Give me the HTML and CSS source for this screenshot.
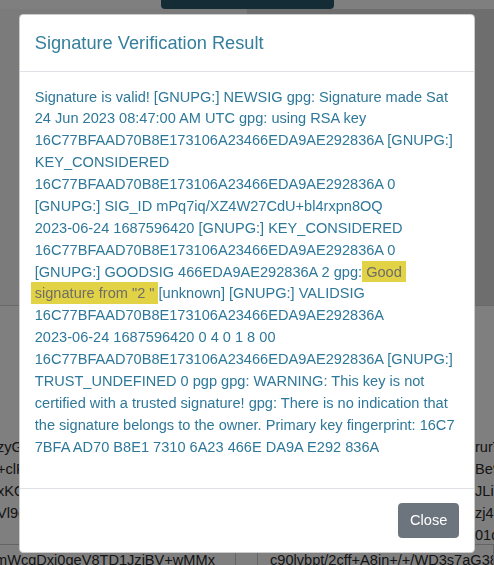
FILE: index.html
```html
<!DOCTYPE html>
<html lang="en">
<head>
<meta charset="utf-8">
<title>Signature Verification Result</title>
<link rel="stylesheet" href="styles.css">
</head>
<body>
<div class="page">
  <div class="topbar"><button class="topbtn" type="button"></button></div>
  <div class="panel-row">
    <div class="panel panel-light"></div>
    <div class="panel panel-dark"></div>
  </div>
  <div class="areas upper">
    <div class="area area-left">
      <div class="scroll">
        <div>zyGq</div>
        <div>+clR</div>
        <div>xKQ5</div>
        <div>Vl9c</div>
      </div>
    </div>
    <div class="area area-right">
      <div class="scroll">
        <div>rurT4k</div>
        <div>Be9xQ2</div>
        <div>JLi7wP</div>
        <div>zj4Ns1</div>
        <div>01qH8d</div>
      </div>
    </div>
  </div>
  <div class="areas lower">
    <div class="area area-left box"><div class="shift">mWcqDxi0geV8TD1JziBV+<span class="typo">wMMx</span></div></div>
    <div class="area area-right box">c90lvbpt/2cff+A8jn+/+/WD3s7aG38</div>
  </div>
</div>

<div class="backdrop"></div>

<div class="modal">
  <div class="modal-content">
    <div class="modal-header">
      <h5 class="modal-title">Signature Verification Result</h5>
    </div>
    <div class="modal-body">
      <p>Signature is valid! [GNUPG:] NEWSIG gpg: Signature made Sat 24 Jun 2023 08:47:00 AM UTC gpg: using RSA key 16C77BFAAD70B8E173106A23466EDA9AE292836A [GNUPG:] KEY_CONSIDERED 16C77BFAAD70B8E173106A23466EDA9AE292836A 0 [GNUPG:] SIG_ID mPq7iq/XZ4W27CdU+bl4rxpn8OQ <span class="nw">2023-06-24</span> 1687596420 [GNUPG:] KEY_CONSIDERED 16C77BFAAD70B8E173106A23466EDA9AE292836A 0 [GNUPG:] GOODSIG 466EDA9AE292836A 2 gpg: <mark class="hl">Good signature from "2 "</mark> [unknown] [GNUPG:] VALIDSIG 16C77BFAAD70B8E173106A23466EDA9AE292836A <span class="nw">2023-06-24</span> 1687596420 0 4 0 1 8 00 16C77BFAAD70B8E173106A23466EDA9AE292836A [GNUPG:] TRUST_UNDEFINED 0 pgp gpg: WARNING: This key is not certified with a trusted signature! gpg: There is no indication that the signature belongs to the owner. Primary key fingerprint: 16C7 7BFA AD70 B8E1 7310 6A23 466E DA9A E292 836A</p>
    </div>
    <div class="modal-footer">
      <button class="btn btn-secondary" type="button">Close</button>
    </div>
  </div>
</div>
</body>
</html>
```

FILE: styles.css
```css
* { box-sizing: border-box; }

html, body {
  margin: 0;
  padding: 0;
  height: 100%;
  overflow: hidden;
}

body {
  font-family: "Liberation Sans", Arial, sans-serif;
  font-size: 14.58px;
  line-height: 21.875px;
  color: #212529;
  background: #ffffff;
}

/* ---------- background page ---------- */
.page {
  display: flex;
  flex-direction: column;
}

.topbar {
  height: 9px;
  display: flex;
  justify-content: center;
}

.topbtn {
  width: 173px;
  height: 9px;
  border: 0;
  padding: 0;
  background: #26586a;
  border-radius: 0 0 4px 4px;
}

.panel-row {
  height: 297px;
  display: grid;
  grid-template-columns: 247px 1fr;
  border-bottom: 1px solid #d2d2d2;
}

.panel-light { background: #f7f7f7; }
.panel-dark { background: #dcdcdc; }

.areas {
  display: grid;
  grid-template-columns: 236px 237px;
  column-gap: 21px;
  color: #2a2a2a;
  white-space: nowrap;
}

.upper {
  margin-top: 134px;
  height: 104px;
}

.area { overflow: hidden; }

.upper .area-left .scroll {
  margin-top: -3px;
  margin-left: -3px;
}

.upper .area-right .scroll {
  margin-top: -3px;
  padding-left: 218px;
}

.lower {
  height: 30px;
}

.box {
  border: 1px solid #c8c8c8;
  padding: 5px 12px;
}

.area-left.box {
  padding-left: 0;
  border-left: 0;
}

.shift { margin-left: -5px; }

.typo {
  text-decoration: underline dotted #ff3a3a;
  text-decoration-thickness: 2px;
  text-underline-offset: 3px;
}

.backdrop {
  position: fixed;
  inset: 0;
  background: rgba(0, 0, 0, 0.5);
}

/* ---------- modal ---------- */
.modal {
  position: fixed;
  inset: 0;
  display: flex;
  justify-content: center;
  align-items: flex-start;
  padding-top: 14px;
}

.modal-content {
  width: 455.7px;
  background: #ffffff;
  border: 1px solid rgba(0, 0, 0, 0.2);
  border-radius: 4.4px;
  display: flex;
  flex-direction: column;
  color: #2f789a;
}

.modal-header {
  padding: 14px 14.58px 14.58px;
  border-bottom: 1px solid #dee2e6;
}

.modal-title {
  margin: 0;
  font-size: 18.23px;
  line-height: 27.35px;
  font-weight: 500;
  color: #357f9d;
}

.modal-body {
  padding: 14.58px;
}

.modal-body p {
  margin: 0 0 14.58px;
}

.nw { white-space: nowrap; }

.hl {
  background: #e2d246;
  color: #6e6e66;
  padding: 0.2em 0;
  -webkit-box-decoration-break: clone;
  box-decoration-break: clone;
  box-shadow: -4px 0 0 #e2d246, 4px 0 0 #e2d246;
}

.modal-footer {
  display: flex;
  justify-content: flex-end;
  align-items: center;
  padding: 10.9px;
  border-top: 1px solid #dee2e6;
}

.btn {
  margin: 3.65px;
  font-family: inherit;
  font-size: 14.58px;
  line-height: 21.875px;
  padding: 5.47px 10.94px;
  border: 1px solid transparent;
  border-radius: 3.65px;
}

.btn-secondary {
  background: #6c757d;
  border-color: #6c757d;
  color: #ffffff;
}
```
